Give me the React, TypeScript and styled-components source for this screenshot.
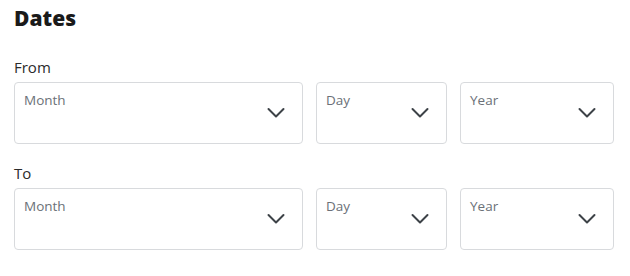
import React from "react";
import styled, { createGlobalStyle } from "styled-components";

const Global = createGlobalStyle`
  html, body { margin: 0; padding: 0; background: #fff; }
  body { font-family: "Open Sans", "Noto Sans", Arial, sans-serif; color: #222; }
`;

const Page = styled.div`
  padding: 3px 14px 0 14px;
`;

const Title = styled.h2`
  margin: 0;
  font-size: 21px;
  line-height: 30px;
  font-weight: 800;
  color: #1a1a1a;
`;

const Group = styled.div<{ $top: number }>`
  margin-top: ${(p) => p.$top}px;
`;

const GroupLabel = styled.div`
  font-size: 15px;
  line-height: 20px;
  color: #2b2b2b;
  margin-bottom: 5px;
`;

const Row = styled.div`
  display: grid;
  grid-template-columns: 289px 131px 154px;
  column-gap: 13px;
`;

const Select = styled.div`
  box-sizing: border-box;
  height: 62px;
  border: 1px solid #d8dadd;
  border-radius: 4px;
  position: relative;
  padding: 7px 9px;
`;

const Placeholder = styled.div`
  font-size: 13.5px;
  line-height: 20px;
  color: #6b7178;
`;

const Chevron = styled.svg`
  position: absolute;
  right: 17px;
  top: 50%;
  transform: translateY(-50%);
`;

const Arrow = () => (
  <Chevron width="18" height="11" viewBox="0 0 18 11" fill="none">
    <path d="M1.5 1.5 L9 9 L16.5 1.5" stroke="#3d4247" strokeWidth="2" strokeLinecap="round" strokeLinejoin="round" />
  </Chevron>
);

const Field = ({ label }: { label: string }) => (
  <Select>
    <Placeholder>{label}</Placeholder>
    <Arrow />
  </Select>
);

const DateRow = () => (
  <Row>
    <Field label="Month" />
    <Field label="Day" />
    <Field label="Year" />
  </Row>
);

export default function App() {
  return (
    <>
      <Global />
      <Page>
        <Title>Dates</Title>
        <Group $top={24}>
          <GroupLabel>From</GroupLabel>
          <DateRow />
        </Group>
        <Group $top={19}>
          <GroupLabel>To</GroupLabel>
          <DateRow />
        </Group>
      </Page>
    </>
  );
}
